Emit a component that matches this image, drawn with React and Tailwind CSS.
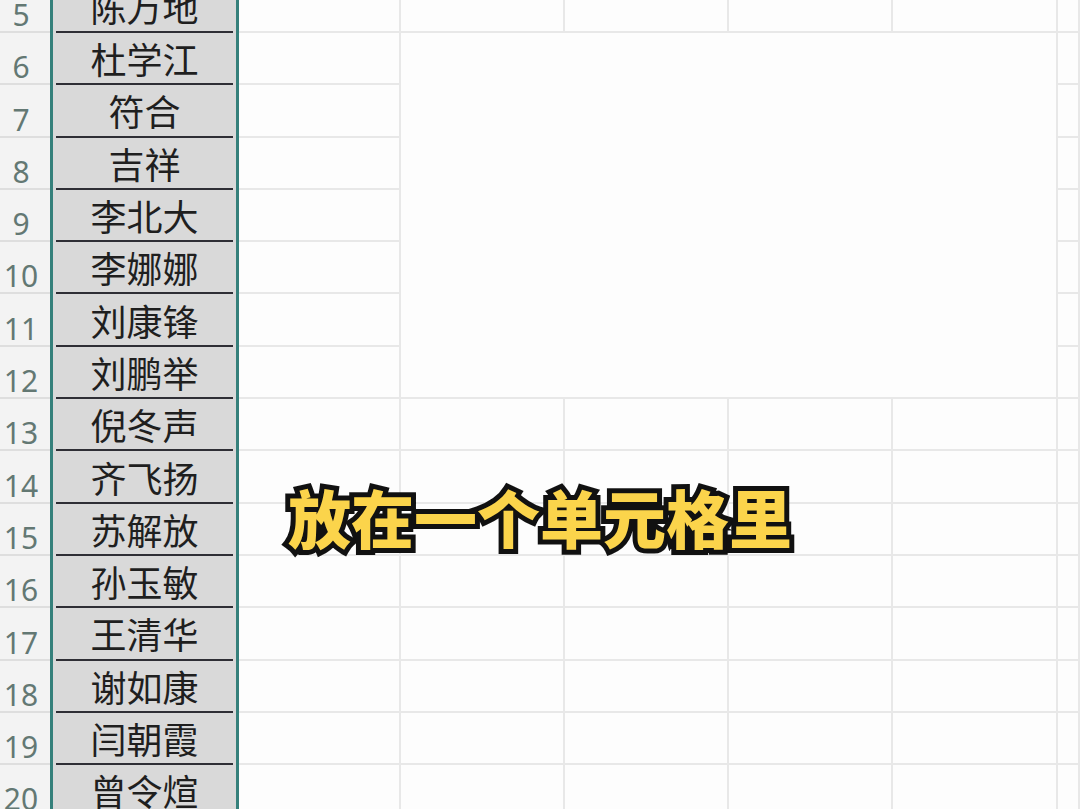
import React from "react";

const names = [
  "陈万地", "杜学江", "符合", "吉祥", "李北大", "李娜娜", "刘康锋", "刘鹏举",
  "倪冬声", "齐飞扬", "苏解放", "孙玉敏", "王清华", "谢如康", "闫朝霞", "曾令煊",
];

export default function App() {
  const cells = [];
  names.forEach((name, i) => {
    const rowNum = i + 5;
    cells.push(
      <div
        key={`h${i}`}
        className="flex items-end justify-center pr-[8px] pb-[1px] bg-[#f3f3f3] border-b-2 border-[#dedede] text-[30px] leading-none text-[#637873]"
        style={{ fontFamily: '"Noto Sans", Roboto, sans-serif' }}
      >
        <span>{rowNum}</span>
      </div>
    );
    cells.push(
      <div
        key={`b${i}`}
        className="flex flex-col bg-[#d9d9d9] border-x-[3px] border-[#35807b]"
      >
        <div
          className="flex-1 flex items-center justify-center text-[36px] leading-none text-[#1f1f1f]"
          style={{ fontFamily: '"Noto Sans CJK SC", sans-serif' }}
        >
          {name}
        </div>
        <div className="mx-[3px] h-[2px] bg-[#2e2e35]" />
      </div>
    );
    for (let c = 2; c <= 7; c++) {
      const inMerge = i >= 1 && i <= 7 && c >= 3 && c <= 6;
      if (inMerge) continue;
      cells.push(
        <div
          key={`c${i}-${c}`}
          className="bg-[#fdfdfd] border-r-2 border-b-2 border-[#e8e8e8]"
        />
      );
    }
  });

  return (
    <div className="relative w-[1080px] h-[809px] overflow-hidden bg-white">
      <div className="grid grid-cols-[50px_189px_162px_164px_164px_164px_165px_1fr] grid-rows-[repeat(16,52.3px)] mt-[-19.3px]">
        <div className="col-start-4 col-span-4 row-start-2 row-span-7 bg-[#fdfdfd] border-r-2 border-b-2 border-[#e8e8e8]" />
        {cells}
      </div>
      <div
        className="absolute left-[288px] top-[484px] whitespace-nowrap text-[63px] leading-none font-black text-[#fbd44b] [paint-order:stroke_fill] [-webkit-text-stroke:10px_#111111]"
        style={{ fontFamily: '"Noto Sans CJK SC", sans-serif' }}
      >
        放在一个单元格里
      </div>
    </div>
  );
}
